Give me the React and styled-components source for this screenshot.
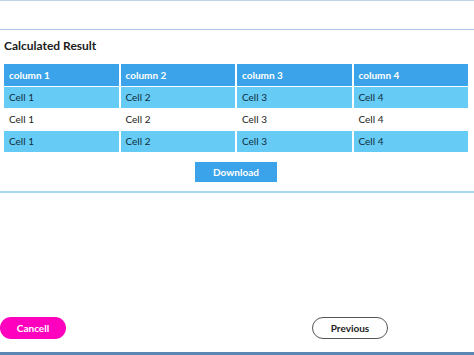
import React from "react";
import styled, { createGlobalStyle } from "styled-components";

const Global = createGlobalStyle`
  html, body { margin: 0; padding: 0; background: #fff; }
  body { font-family: Lato, "Open Sans", sans-serif; }
`;

const Page = styled.div`
  height: 355px;
  display: flex;
  flex-direction: column;
  box-sizing: border-box;
  border-bottom: 3px solid #5b87b5;
  overflow: hidden;
`;

const TopBar = styled.div`
  height: 28px;
  border-top: 1px solid #c2d3e7;
  border-bottom: 1px solid #a9c6e6;
`;

const Section = styled.div`
  padding: 0 6px 0 4px;
`;

const Title = styled.h2`
  margin: 0;
  padding-top: 8px;
  line-height: 16px;
  font-size: 12px;
  font-weight: 700;
  color: #1b1b1b;
  margin-bottom: 10px;
`;

const Grid = styled.div`
  display: grid;
  grid-template-columns: repeat(4, 1fr);
  column-gap: 2px;
  row-gap: 1px;
`;

const Cell = styled.div`
  height: ${(p) => (p.$head ? 22 : 21)}px;
  line-height: ${(p) => (p.$head ? 22 : 21)}px;
  padding-left: 5px;
  font-size: 10px;
  font-weight: ${(p) => (p.$head ? 700 : 400)};
  background: ${(p) => (p.$head ? "#3aa3e9" : p.$tint ? "#67ccf5" : "#fff")};
  color: ${(p) => (p.$head ? "#fff" : p.$tint ? "#0f2d3d" : "#222")};
  white-space: nowrap;
`;

const Actions = styled.div`
  display: flex;
  justify-content: center;
  padding: 10px 0 9px 0;
`;

const DownloadButton = styled.button`
  width: 82px;
  height: 20px;
  border: none;
  background: #3aa3e9;
  color: #fff;
  font-family: inherit;
  font-size: 10px;
  font-weight: 700;
  padding: 0;
`;

const Divider = styled.div`
  height: 2px;
  background: #a5d6f2;
`;

const Spacer = styled.div`
  flex: 1;
`;

const Footer = styled.div`
  display: flex;
  justify-content: space-between;
  align-items: center;
  padding: 0 86px 13px 0;
`;

const Pill = styled.button`
  height: 22px;
  border-radius: 11px;
  font-family: inherit;
  font-size: 10px;
  font-weight: 700;
  padding: 0;
  width: ${(p) => p.$w}px;
  background: ${(p) => (p.$primary ? "#ff00bf" : "#fff")};
  color: ${(p) => (p.$primary ? "#fff" : "#222")};
  border: ${(p) => (p.$primary ? "none" : "1px solid #555")};
`;

const rows = [
  { tint: true },
  { tint: false },
  { tint: true },
];

export default function App() {
  return (
    <>
      <Global />
      <Page>
        <TopBar />
        <Section>
          <Title>Calculated Result</Title>
          <Grid>
            {["column 1", "column 2", "column 3", "column 4"].map((c) => (
              <Cell key={c} $head>
                {c}
              </Cell>
            ))}
            {rows.map((r, i) =>
              ["Cell 1", "Cell 2", "Cell 3", "Cell 4"].map((c) => (
                <Cell key={i + c} $tint={r.tint}>
                  {c}
                </Cell>
              ))
            )}
          </Grid>
          <Actions>
            <DownloadButton>Download</DownloadButton>
          </Actions>
        </Section>
        <Divider />
        <Spacer />
        <Footer>
          <Pill $primary $w={66}>Cancell</Pill>
          <Pill $w={76}>Previous</Pill>
        </Footer>
      </Page>
    </>
  );
}
